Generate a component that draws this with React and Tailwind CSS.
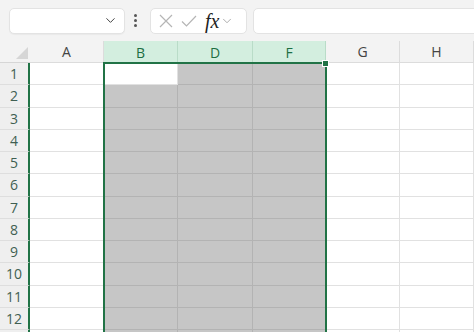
import { ChevronDown } from "lucide-react";

const COLUMNS = [
  { label: "A", selected: false },
  { label: "B", selected: true },
  { label: "D", selected: true },
  { label: "F", selected: true },
  { label: "G", selected: false },
  { label: "H", selected: false },
];

const ROWS = Array.from({ length: 13 }, (_, i) => i + 1);

function NameBox() {
  return (
    <div className="ml-[9px] flex h-[26px] w-[116px] items-center justify-end rounded-[5px] border border-[#e3e3e3] bg-white pr-[6px] shadow-[0_1px_1px_rgba(0,0,0,0.04)]">
      <ChevronDown size={15} strokeWidth={1.6} className="text-[#444]" />
    </div>
  );
}

function FormulaIcons() {
  return (
    <div className="ml-[4px] flex h-[26px] w-[97px] items-center rounded-[5px] border border-[#e3e3e3] bg-white pl-[6px]">
      {/* cancel */}
      <svg width="16" height="16" viewBox="0 0 16 16" className="ml-[1px]">
        <path d="M2 2 L14 14 M14 2 L2 14" stroke="#b5b5b5" strokeWidth="1.2" fill="none" />
      </svg>
      {/* enter */}
      <svg width="18" height="16" viewBox="0 0 18 16" className="ml-[6px]">
        <path d="M2 8.5 L6.5 13 L16 3" stroke="#b5b5b5" strokeWidth="1.2" fill="none" />
      </svg>
      <span className="ml-[7px] font-['Liberation_Serif',serif] text-[20px] italic leading-none text-[#222]">
        fx
      </span>
      <ChevronDown size={14} strokeWidth={1.4} className="ml-[1px] text-[#9a9a9a]" />
    </div>
  );
}

function Toolbar() {
  return (
    <div className="flex h-[41px] items-center bg-[#f3f3f3]">
      <NameBox />
      <div className="mx-[9px] flex flex-col items-center gap-[2px]">
        <span className="h-[3px] w-[3px] rounded-full bg-[#555]" />
        <span className="h-[3px] w-[3px] rounded-full bg-[#555]" />
        <span className="h-[3px] w-[3px] rounded-full bg-[#555]" />
      </div>
      <FormulaIcons />
      <div className="ml-[6px] -mr-[6px] h-[26px] flex-1 rounded-[5px] border border-[#e3e3e3] bg-white" />
    </div>
  );
}

function HeaderRow() {
  return (
    <>
      <div className="relative h-[22px] border-b border-[#d6d6d6] bg-[#f3f3f3]">
        <svg width="12" height="12" viewBox="0 0 12 12" className="absolute bottom-[3px] right-[2px]">
          <path d="M12 0 L12 12 L0 12 Z" fill="#d6d6d6" />
        </svg>
      </div>
      {COLUMNS.map((c) =>
        c.selected ? (
          <div
            key={c.label}
            className="flex h-[22px] items-center justify-center border-r border-[#b9dcc8] bg-[#d3eedf] text-[14px] text-[#1e6e43]"
          >
            {c.label}
          </div>
        ) : (
          <div
            key={c.label}
            className="flex h-[22px] items-center justify-center border-b border-r border-[#dcdcdc] bg-[#f3f3f3] text-[14px] text-[#444]"
          >
            {c.label}
          </div>
        )
      )}
    </>
  );
}

function BodyRow({ n }) {
  return (
    <>
      <div className="flex h-[22.25px] items-center justify-center border-b border-r-2 border-b-[#dedede] border-r-[#217346] bg-[#efefef] text-[14px] text-[#3f5f52]">
        {n <= 12 ? n : ""}
      </div>
      {COLUMNS.map((c, ci) => {
        const active = n === 1 && ci === 1;
        if (c.selected && !active) {
          return (
            <div
              key={c.label}
              className="h-[22.25px] border-b border-r border-[#b3b3b3] bg-[#c6c6c6]"
            />
          );
        }
        return (
          <div
            key={c.label}
            className="h-[22.25px] border-b border-r border-[#e1e1e1] bg-white"
          />
        );
      })}
    </>
  );
}

export default function App() {
  return (
    <div className="h-[332px] w-[474px] overflow-hidden bg-white font-['Open_Sans','Noto_Sans',sans-serif]">
      <Toolbar />
      <div className="relative grid grid-cols-[30px_74px_74px_75px_73px_74px_74px]">
        <HeaderRow />
        {ROWS.map((n) => (
          <BodyRow key={n} n={n} />
        ))}
        {/* column selection outline */}
        <div className="pointer-events-none absolute left-[103px] top-[21px] h-[300px] w-[224px] border-2 border-[#217346]" />
        <div className="pointer-events-none absolute left-[323px] top-[20px] h-[5px] w-[5px] bg-[#217346] ring-1 ring-white" />
      </div>
    </div>
  );
}
